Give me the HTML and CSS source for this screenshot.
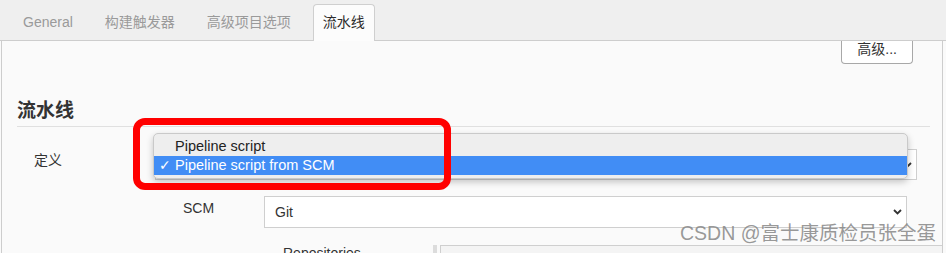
FILE: index.html
```html
<!DOCTYPE html>
<html lang="zh">
<head>
<meta charset="utf-8">
<title>流水线</title>
<link rel="stylesheet" href="styles.css">
</head>
<body>
<div class="page">
  <div class="tabbar">
    <div class="tab">General</div>
    <div class="tab">构建触发器</div>
    <div class="tab">高级项目选项</div>
    <div class="tab active">流水线</div>
  </div>
  <div class="content">
    <div class="adv-row"><button class="adv">高级...</button></div>
    <h2 class="section">流水线</h2>
    <div class="row def-row">
      <div class="label">定义</div>
      <div class="sel-wrap def-sel">
        <div class="sel">
          <span class="sel-text"></span>
          <svg class="chev" width="9" height="6" viewBox="0 0 9 6"><path d="M1 1 L4.5 4.5 L8 1" fill="none" stroke="#333" stroke-width="1.8"/></svg>
        </div>
        <div class="dropdown">
          <div class="opt">Pipeline script</div>
          <div class="opt selected"><span class="check">✓</span>Pipeline script from SCM</div>
        </div>
      </div>
    </div>
    <div class="row scm-row">
      <div class="label scm-label">SCM</div>
      <div class="sel-wrap scm-sel">
        <div class="sel tall">
          <span class="sel-text">Git</span>
          <svg class="chev" width="9" height="6" viewBox="0 0 9 6"><path d="M1 1 L4.5 4.5 L8 1" fill="none" stroke="#333" stroke-width="1.8"/></svg>
        </div>
      </div>
    </div>
    <div class="row repo-row">
      <div class="label repo-label">Repositories</div>
      <div class="repo-bar"><div class="repo-inner"></div></div>
    </div>
  </div>
  <div class="annot"></div>
  <div class="watermark">CSDN @富士康质检员张全蛋</div>
</div>
</body>
</html>
```
FILE: styles.css
```css
* { box-sizing: border-box; }
html, body { margin: 0; padding: 0; }
body {
  background: #fafafa;
  font-family: "Liberation Sans", "Noto Sans CJK SC", sans-serif;
  font-size: 14px;
  color: #333;
}
.page {
  position: relative;
  width: 946px;
  height: 253px;
  overflow: hidden;
}
.tabbar {
  display: flex;
  gap: 12px;
  height: 41px;
  padding: 4px 0 0 13px;
  background: #efefef;
  border-bottom: 1px solid #cdcdcd;
}
.tab {
  padding: 0 10px;
  line-height: 36px;
  color: #9a9a9a;
}
.tab.active {
  position: relative;
  padding: 0 9px;
  height: 37px;
  color: #2b2b2b;
  background: #fcfcfc;
  border: 1px solid #cfcfcf;
  border-bottom: none;
  border-radius: 4px 4px 0 0;
  line-height: 35px;
}
.content {
  margin: 0 3px 0 1px;
  height: 212px;
  border-left: 1px solid #cdcdcd;
  border-right: 1px solid #cdcdcd;
}
.adv-row {
  display: flex;
  justify-content: flex-end;
  padding-right: 29px;
}
.adv {
  font-family: inherit;
  font-size: 14px;
  color: #333;
  line-height: 16px;
  padding: 0 15px 6px;
  background: #fff;
  border: 1px solid #a8a8a8;
  border-top: none;
  border-radius: 0 0 4px 4px;
  height: 23px;
}
.section {
  margin: 35px 12px 0 15px;
  font-size: 19px;
  line-height: 24px;
  font-weight: bold;
  color: #333;
  padding-bottom: 3px;
  border-bottom: 1px solid #e0e0e0;
}
.row { display: flex; }
.label {
  padding-top: 1px;
  line-height: 20px;
  color: #333;
}
.def-row { margin-top: 22px; padding-left: 32px; }
.def-row .label { width: 121px; }
.def-sel { flex: 1; margin-right: 25px; }
.sel-wrap { position: relative; }
.sel {
  display: flex;
  align-items: center;
  height: 31px;
  padding: 0 4px 0 10px;
  background: #fff;
  border: 1px solid #cfcfcf;
}
.sel.tall { height: 32px; }
.sel-text { flex: 1; color: #333; }
.chev { display: block; }
.dropdown {
  position: absolute;
  left: -2px;
  top: -16px;
  width: 755px;
  padding: 3px 0;
  background: #eeeeee;
  border: 1px solid #c9c9c9;
  border-radius: 5px;
  box-shadow: 0 3px 7px rgba(0, 0, 0, 0.22);
}
.opt {
  position: relative;
  height: 19px;
  line-height: 19px;
  padding-left: 21px;
  font-size: 14.5px;
  color: #222;
}
.opt.selected {
  background: #418df5;
  color: #fff;
}
.check {
  position: absolute;
  left: 5px;
  top: 0;
  font-family: "DejaVu Sans", sans-serif;
  font-size: 14px;
  font-weight: bold;
}
.scm-row { margin-top: 16px; padding-left: 181px; }
.scm-label { width: 81px; padding-top: 2px; }
.scm-sel { flex: 1; margin-right: 35px; }
.repo-row { margin-top: 14px; padding-left: 281px; }
.repo-label { width: 150px; }
.repo-bar {
  flex: 1;
  margin-top: 3px;
  border-left: 4px solid #dcdcdc;
  height: 30px;
}
.repo-inner {
  margin-left: 3px;
  height: 30px;
  background: #f4f4f4;
  border-top: 1px solid #cfcfcf;
  border-left: 1px solid #cfcfcf;
}
.annot {
  position: absolute;
  left: 133px;
  top: 118px;
  width: 318px;
  height: 72px;
  border: 7.5px solid #ff0000;
  border-radius: 12px;
}
.watermark {
  position: absolute;
  right: 10px;
  top: 221px;
  font-size: 19.5px;
  line-height: 24px;
  color: rgba(135, 135, 135, 0.85);
  white-space: nowrap;
}
```
